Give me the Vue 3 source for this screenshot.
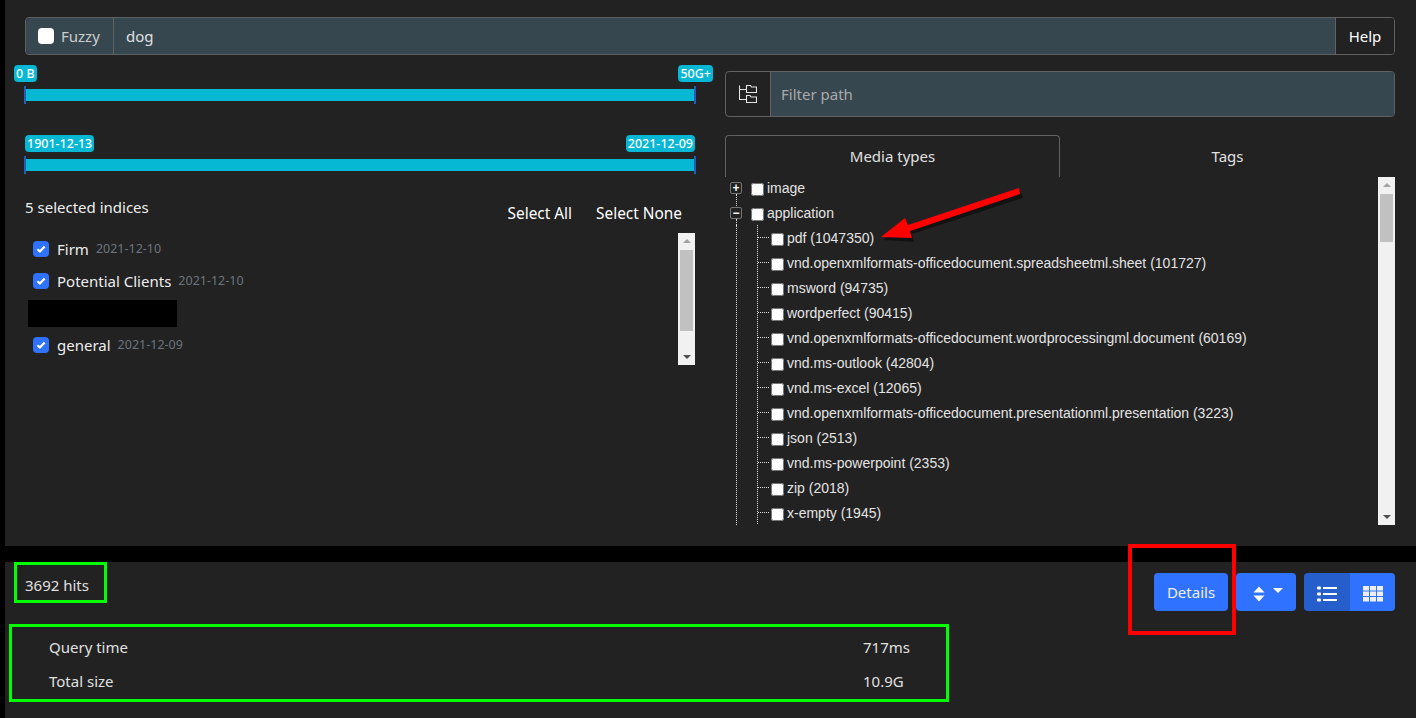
<template>
  <div class="page">
    <section class="panel top">
      <div class="search-bar">
        <label class="fuzzy"><span class="switch"></span>Fuzzy</label>
        <input class="search-input" type="text" value="dog" />
        <button class="help">Help</button>
      </div>

      <div class="columns">
        <div class="col">
          <div v-for="s in sliders" :key="s.min" class="slider" :class="s.cls">
            <span class="badge badge-min">{{ s.min }}</span>
            <span class="badge badge-max">{{ s.max }}</span>
            <span class="handle handle-min"></span>
            <span class="handle handle-max"></span>
          </div>

          <div class="indices-head">
            <span class="indices-title">5 selected indices</span>
            <div class="indices-actions">
              <button class="text-btn">Select All</button>
              <button class="text-btn">Select None</button>
            </div>
          </div>

          <div class="indices">
            <div class="indices-list">
              <template v-for="item in indices" :key="item.name">
                <div v-if="item.redacted" class="index-row"><div class="redacted"></div></div>
                <div v-else class="index-row">
                  <span class="check">
                    <svg viewBox="0 0 8 8" width="10" height="10"><path d="M1.2 4.2 3.1 6 6.9 2" fill="none" stroke="#fff" stroke-width="1.7" /></svg>
                  </span>
                  <span class="index-name">{{ item.name }}</span>
                  <span class="index-date">{{ item.date }}</span>
                </div>
              </template>
            </div>
            <div class="scrollbar">
              <span class="arrow up"></span>
              <span class="thumb thumb-list"></span>
              <span class="arrow down"></span>
            </div>
          </div>
        </div>

        <div class="col">
          <div class="path-filter">
            <span class="path-icon">
              <svg viewBox="0 0 18 18" width="18" height="18" fill="none" stroke="#e4e4e4" stroke-width="1.1">
                <path d="M.5.5v14h7M.5 4.500h7" />
                <path d="M7.500.500h4l1 1.500h5v5.500h-10zM7.500 10.500h3.500l1 1.500h5.500v5.500h-10z" />
              </svg>
            </span>
            <input class="path-input" type="text" placeholder="Filter path" />
          </div>

          <div class="tabs">
            <div class="tab active">Media types</div>
            <div class="tab">Tags</div>
          </div>

          <div class="tree-box">
            <div class="tree">
              <div class="tree-row parent first">
                <span class="toggler">+</span>
                <input type="checkbox" class="tree-check" />
                <span>image</span>
              </div>
              <div class="tree-row parent">
                <span class="toggler">−</span>
                <input type="checkbox" class="tree-check" />
                <span>application</span>
              </div>
              <div class="tree-children">
                <div v-for="m in mediaTypes" :key="m" class="tree-row child">
                  <input type="checkbox" class="tree-check" />
                  <span>{{ m }}</span>
                </div>
              </div>
            </div>
            <div class="scrollbar">
              <span class="arrow up"></span>
              <span class="thumb thumb-tree"></span>
              <span class="arrow down"></span>
            </div>
          </div>
        </div>
      </div>
    </section>

    <section class="panel bottom">
      <div class="result-head">
        <span class="hits">3692 hits</span>
        <div class="result-actions">
          <button class="btn details">Details</button>
          <button class="btn sort">
            <svg viewBox="0 0 12 16" width="12" height="16" fill="#fff">
              <path d="M6 .5 11.500 6.500H.5zM6 15.500.5 9.500h11z" />
            </svg>
            <span class="caret"></span>
          </button>
          <div class="btn-group">
            <button class="btn view on">
              <svg viewBox="0 0 20 16" width="20" height="16" fill="#fff">
                <rect y="0.500" width="4" height="3" rx="1" />
                <rect y="6.500" width="4" height="3" rx="1" />
                <rect y="12.500" width="4" height="3" rx="1" />
                <rect x="6" y="1" width="14" height="2" />
                <rect x="6" y="7" width="14" height="2" />
                <rect x="6" y="13" width="14" height="2" />
              </svg>
            </button>
            <button class="btn view">
              <svg viewBox="0 0 20 16" width="20" height="16" fill="#eee">
                <template v-for="r in 3" :key="r">
                  <rect v-for="c in 3" :key="c" :x="(c - 1) * 7" :y="(r - 1) * 5.500" width="6" height="4.500" />
                </template>
              </svg>
            </button>
          </div>
        </div>
      </div>

      <div class="stats">
        <div v-for="row in stats" :key="row.label" class="stat-row">
          <span>{{ row.label }}</span>
          <span>{{ row.value }}</span>
        </div>
      </div>
    </section>

    <!-- annotations drawn on top of the screenshot -->
    <div class="mark green mark-hits"></div>
    <div class="mark green mark-stats"></div>
    <div class="mark red mark-details"></div>
    <svg class="mark-arrow" viewBox="0 0 150 60" width="150" height="60">
      <polygon points="139,3 141,10 30,46 32,54 1,52 25,34 28,40" fill="#000" opacity="0.45" transform="translate(2 3)" />
      <polygon points="139,3 140,9 30,46 32,53 1,52 25,33 28,40" fill="#f00" />
    </svg>
  </div>
</template>

<script setup>
const sliders = [
  { min: '0 B', max: '50G+', cls: 'size' },
  { min: '1901-12-13', max: '2021-12-09', cls: 'date' }
]

const indices = [
  { name: 'Firm', date: '2021-12-10' },
  { name: 'Potential Clients', date: '2021-12-10' },
  { name: 'hidden', redacted: true },
  { name: 'general', date: '2021-12-09' }
]

const mediaTypes = [
  'pdf (1047350)',
  'vnd.openxmlformats-officedocument.spreadsheetml.sheet (101727)',
  'msword (94735)',
  'wordperfect (90415)',
  'vnd.openxmlformats-officedocument.wordprocessingml.document (60169)',
  'vnd.ms-outlook (42804)',
  'vnd.ms-excel (12065)',
  'vnd.openxmlformats-officedocument.presentationml.presentation (3223)',
  'json (2513)',
  'vnd.ms-powerpoint (2353)',
  'zip (2018)',
  'x-empty (1945)'
]

const stats = [
  { label: 'Query time', value: '717ms' },
  { label: 'Total size', value: '10.9G' }
]
</script>

<style>
html,
body {
  margin: 0;
  background: #000;
}
</style>

<style scoped>
.page {
  position: relative;
  width: 1416px;
  height: 718px;
  overflow: hidden;
  padding-left: 5px;
  box-sizing: border-box;
  background: #000;
  color: #e0e0e0;
  font-family: "Noto Sans", sans-serif;
  font-size: 15px;
  line-height: 24px;
}

.panel {
  background: #222;
  box-sizing: border-box;
  padding: 0 21px 0 20px;
}

.top {
  height: 546px;
  padding-top: 17px;
  margin-bottom: 16px;
}

.bottom {
  height: 156px;
  padding-top: 11px;
}

button,
input {
  font: inherit;
  color: inherit;
}

.search-bar {
  display: flex;
  height: 38px;
  box-sizing: border-box;
  border: 1px solid #616161;
  border-radius: 4px;
  overflow: hidden;
}

.fuzzy {
  display: flex;
  align-items: center;
  gap: 7px;
  width: 88px;
  padding-left: 12px;
  box-sizing: border-box;
  background: #37474f;
  border-right: 1px solid #616161;
  color: #ccc;
}

.switch {
  width: 16px;
  height: 16px;
  border-radius: 4px;
  background: #fff;
}

.search-input {
  flex: 1;
  min-width: 0;
  padding: 0 12px;
  border: 0;
  outline: 0;
  background: #37474f;
  color: #e0e0e0;
}

.help {
  width: 59px;
  padding: 0;
  border: 0;
  border-left: 1px solid #616161;
  background: #222;
  color: #fff;
}

.columns {
  display: grid;
  grid-template-columns: 670px 670px;
  column-gap: 30px;
  margin-top: 16px;
}

.slider {
  position: relative;
  height: 12px;
  background: #06b8d3;
}

.slider.size {
  margin-top: 18px;
}

.slider.date {
  margin-top: 58px;
}

.badge {
  position: absolute;
  top: -24px;
  height: 17px;
  padding: 0 2px;
  border-radius: 4px;
  background: #06b8d3;
  color: #fff;
  font-size: 12.500px;
  font-weight: 500;
  line-height: 17px;
  white-space: nowrap;
}

.badge-min {
  left: 0;
}

.badge-max {
  right: 0;
}

.size .badge-min {
  left: -11px;
}

.size .badge-max {
  right: -18px;
}

.handle {
  position: absolute;
  top: -3px;
  width: 2px;
  height: 18px;
  background: #1f5fb8;
}

.handle-min {
  left: -1px;
}

.handle-max {
  right: -1px;
}

.indices-head {
  display: flex;
  justify-content: space-between;
  margin-top: 24px;
}

.indices-title {
  color: #eee;
}

.indices-actions {
  display: flex;
  margin-right: 1px;
}

.text-btn {
  height: 38px;
  padding: 0 12px;
  border: 0;
  background: none;
  color: #fff;
  font-size: 15.400px;
}

.indices {
  display: flex;
  height: 132px;
}

.indices-list {
  flex: 1;
}

.index-row {
  display: flex;
  align-items: center;
  height: 32px;
  padding-left: 8px;
  box-sizing: border-box;
}

.check {
  display: flex;
  align-items: center;
  justify-content: center;
  width: 16px;
  height: 16px;
  margin-right: 8px;
  border-radius: 4px;
  background: #2f72ff;
}

.index-name {
  margin-right: 7px;
  color: #eee;
}

.index-date {
  color: #6c757d;
  font-size: 12.500px;
}

.redacted {
  width: 149px;
  height: 27px;
  margin-left: -5px;
  background: #000;
}

.scrollbar {
  flex: none;
  display: flex;
  flex-direction: column;
  align-items: center;
  width: 17px;
  background: #f1f1f1;
}

.arrow {
  flex: none;
  width: 0;
  height: 0;
  border-left: 4px solid transparent;
  border-right: 4px solid transparent;
}

.arrow.up {
  margin: 6px 0 7px;
  border-bottom: 4px solid #a3a3a3;
}

.arrow.down {
  margin: auto 0 6px;
  border-top: 4px solid #505050;
}

.thumb {
  flex: none;
  width: 13px;
  background: #c1c1c1;
}

.thumb-list {
  height: 81px;
}

.thumb-tree {
  height: 48px;
}

.path-filter {
  display: flex;
  height: 46px;
  box-sizing: border-box;
  border: 1px solid #616161;
  border-radius: 4px;
  overflow: hidden;
}

.path-icon {
  display: flex;
  align-items: center;
  justify-content: center;
  width: 45px;
  border-right: 1px solid #616161;
  box-sizing: border-box;
}

.path-input {
  flex: 1;
  min-width: 0;
  padding: 0 10px;
  border: 0;
  outline: 0;
  background: #37474f;
}

.path-input::placeholder {
  color: #aaa;
  opacity: 1;
}

.tabs {
  display: grid;
  grid-template-columns: 335px 335px;
  margin-top: 18px;
  height: 42px;
}

.tab {
  display: flex;
  align-items: center;
  justify-content: center;
  color: #e0e0e0;
}

.tab.active {
  padding-bottom: 1px;
  border: 1px solid #616161;
  border-bottom: 0;
  border-radius: 4px 4px 0 0;
}

.tree-box {
  display: flex;
  height: 348px;
}

.tree {
  flex: 1;
  overflow: hidden;
  padding-left: 5px;
  font-family: "Liberation Sans", Arial, sans-serif;
  font-size: 14px;
  color: #e4e4e4;
}

.tree-row {
  display: flex;
  align-items: center;
  height: 25px;
  white-space: nowrap;
}

.tree-row.first {
  margin-top: -2px;
}

.tree-row.parent {
  position: relative;
}

/* dotted link from one toggler to the next */
.tree-row.first::after {
  content: "";
  position: absolute;
  left: 6px;
  top: 19px;
  height: 12px;
  border-left: 1px dotted #ddd;
}

.toggler {
  display: flex;
  align-items: center;
  justify-content: center;
  width: 12px;
  height: 12px;
  margin-right: 9px;
  border: 1px solid #777;
  border-radius: 2px;
  box-sizing: border-box;
  color: #fff;
  font-weight: 700;
  font-size: 12px;
  line-height: 1;
}

.tree-check {
  width: 13px;
  height: 13px;
  margin: 3px 3px 0 0;
}

.tree-children {
  position: relative;
  margin-left: 6px;
  padding-left: 34px;
  border-left: 1px dotted #ddd;
  background-image: linear-gradient(#ddd 50%, transparent 50%);
  background-size: 1px 2px;
  background-position: 20px 0;
  background-repeat: repeat-y;
}

.tree-children::before {
  content: "";
  position: absolute;
  left: -1px;
  top: -6px;
  height: 6px;
  border-left: 1px dotted #ddd;
}

.tree-row.child {
  position: relative;
}

.tree-row.child::before {
  content: "";
  position: absolute;
  left: -13px;
  top: 12px;
  width: 11px;
  border-top: 1px dotted #ddd;
}

.result-head {
  display: flex;
  justify-content: space-between;
}

.hits {
  color: #e0e0e0;
}

.result-actions {
  display: flex;
  gap: 8px;
}

.btn {
  display: flex;
  align-items: center;
  justify-content: center;
  height: 38px;
  padding: 0;
  border: 0;
  border-radius: 4px;
  background: #2f72ff;
  color: #f0f0f0;
}

.btn svg {
  margin-top: 4px;
}

.details {
  width: 74px;
}

.sort {
  gap: 8px;
  width: 60px;
  padding-left: 3px;
  box-sizing: border-box;
}

.caret {
  margin-bottom: 4px;
  border-left: 5px solid transparent;
  border-right: 5px solid transparent;
  border-top: 5px solid #fff;
}

.btn-group {
  display: flex;
}

.view {
  width: 45px;
  border-radius: 0 4px 4px 0;
}

.view.on {
  width: 46px;
  border-radius: 4px 0 0 4px;
  background: #265ecb;
}

.stats {
  margin-top: 19px;
}

.stat-row {
  display: grid;
  grid-template-columns: 814px auto;
  align-items: center;
  height: 34px;
  padding-left: 24px;
}

.mark {
  position: absolute;
  box-sizing: border-box;
  border-style: solid;
  border-width: 3px;
}

.green {
  border-color: #0f0;
}

.red {
  border-color: #f00;
  border-width: 4px;
}

.mark-hits {
  left: 14px;
  top: 562px;
  width: 93px;
  height: 41px;
}

.mark-stats {
  left: 9px;
  top: 624px;
  width: 940px;
  height: 78px;
}

.mark-details {
  left: 1128px;
  top: 544px;
  width: 108px;
  height: 91px;
}

.mark-arrow {
  position: absolute;
  left: 880px;
  top: 185px;
}
</style>
